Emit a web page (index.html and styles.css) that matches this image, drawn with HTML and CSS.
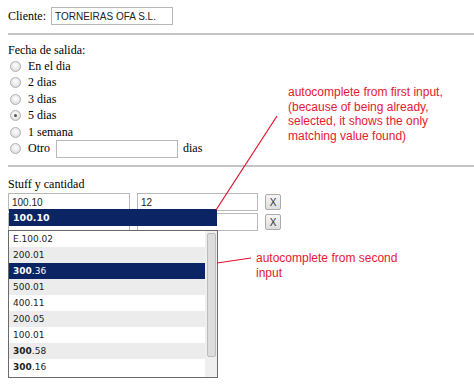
FILE: index.html
```html
<!DOCTYPE html>
<html lang="es">
<head>
    <meta charset="UTF-8">
    <title>Pedido</title>
    <link rel="stylesheet" href="styles.css">
</head>
<body>
    <div class="page">
        <div class="cliente-row">
            <label for="cliente">Cliente:</label>
            <input type="text" id="cliente" class="field cliente-input" value="TORNEIRAS OFA S.L.">
        </div>

        <hr class="sep">

        <div class="fecha">
            <div class="section-title">Fecha de salida:</div>
            <label class="radio-row"><input type="radio" name="fecha"> En el dia</label>
            <label class="radio-row"><input type="radio" name="fecha"> 2 dias</label>
            <label class="radio-row"><input type="radio" name="fecha"> 3 dias</label>
            <label class="radio-row"><input type="radio" name="fecha" checked> 5 dias</label>
            <label class="radio-row"><input type="radio" name="fecha"> 1 semana</label>
            <label class="radio-row"><input type="radio" name="fecha"> Otro <input type="text" class="field otro-input"> dias</label>
        </div>

        <hr class="sep">

        <div class="stuff">
            <div class="section-title">Stuff y cantidad</div>
            <div class="stuff-row">
                <input type="text" class="field code-input" value="100.10">
                <input type="text" class="field qty-input" value="12">
                <button class="del-btn">X</button>
            </div>
            <div class="stuff-row">
                <input type="text" class="field code-input" value="300">
                <input type="text" class="field qty-input">
                <button class="del-btn">X</button>
            </div>
        </div>

        <!-- autocomplete del primer input -->
        <ul class="ac-menu ac-single">
            <li class="ac-item active"><b>100.10</b></li>
        </ul>

        <!-- autocomplete del segundo input -->
        <div class="ac-menu ac-list">
            <ul class="ac-items">
                <li class="ac-item">E.100.02</li>
                <li class="ac-item alt">200.01</li>
                <li class="ac-item active"><b>300</b>.36</li>
                <li class="ac-item alt">500.01</li>
                <li class="ac-item">400.11</li>
                <li class="ac-item alt">200.05</li>
                <li class="ac-item">100.01</li>
                <li class="ac-item alt"><b>300</b>.58</li>
                <li class="ac-item"><b>300</b>.16</li>
            </ul>
            <div class="ac-scroll"><div class="ac-thumb"></div></div>
        </div>

        <svg class="arrows" width="474" height="392" viewBox="0 0 474 392">
            <line x1="277" y1="116" x2="216" y2="210" stroke="#e0102a" stroke-width="1.2"/>
            <line x1="217" y1="263" x2="251" y2="258" stroke="#e0102a" stroke-width="1.2"/>
        </svg>

        <div class="note note-first">autocomplete from first input,<br>(because of being already,<br>selected, it shows the only<br>matching value found)</div>
        <div class="note note-second">autocomplete from second<br>input</div>
    </div>
</body>
</html>
```

FILE: styles.css
```css
body {
    margin: 0;
    font-family: 'Liberation Serif', 'Times New Roman', serif;
    font-size: 12px;
    color: #000;
    background: #fff;
}

.page {
    position: relative;
    width: 474px;
    height: 392px;
    overflow: hidden;
    padding: 7px 0 0 8px;
    box-sizing: border-box;
}

.field {
    box-sizing: border-box;
    height: 18px;
    border: 1px solid #b8b8b8;
    padding: 0 3px;
    font-family: 'Liberation Sans', Arial, sans-serif;
    font-size: 10px;
    color: #222;
    background: #fff;
    outline: none;
}

.cliente-row {
    display: flex;
    align-items: center;
    gap: 5px;
}

.cliente-input {
    width: 122px;
}

.sep {
    border: none;
    height: 2px;
    background: #c4c4c4;
    margin: 8px 0 0 0;
}

.section-title {
    line-height: 16px;
}

.fecha {
    margin-top: 7px;
}

.radio-row {
    display: flex;
    align-items: center;
    height: 16.5px;
    padding-left: 2px;
}

.radio-row input[type="radio"] {
    appearance: none;
    -webkit-appearance: none;
    width: 11px;
    height: 11px;
    margin: 0 7px 0 0;
    border: 1px solid #b0b0b0;
    border-radius: 50%;
    background: radial-gradient(circle at 50% 40%, #ffffff 0%, #e6e6e6 60%, #cfcfcf 100%);
    box-sizing: border-box;
    position: relative;
}

.radio-row input[type="radio"]:checked::after {
    content: '';
    position: absolute;
    left: 3px;
    top: 3px;
    width: 3px;
    height: 3px;
    border-radius: 50%;
    background: #555;
}

.otro-input {
    width: 122px;
    margin: 0 5px 0 6px;
}

.stuff {
    margin-top: 9px;
}

.stuff .section-title {
    margin-bottom: 1px;
}

.stuff-row {
    display: flex;
    align-items: center;
    gap: 7px;
    margin-bottom: 2px;
}

.code-input {
    width: 122px;
}

.qty-input {
    width: 121px;
}

.del-btn {
    width: 16px;
    height: 16px;
    padding: 0;
    border: 1px solid #acacac;
    border-radius: 2px;
    background: linear-gradient(#f6f6f6, #dedede);
    font-family: 'Liberation Sans', Arial, sans-serif;
    font-size: 10px;
    color: #333;
}

.ac-menu {
    position: absolute;
    margin: 0;
    padding: 0;
    list-style: none;
    font-family: 'DejaVu Sans', Verdana, sans-serif;
    font-size: 9px;
}

.ac-single {
    left: 9px;
    top: 209px;
    width: 208px;
    background: #0b2463;
}

.ac-item {
    height: 16px;
    line-height: 16px;
    padding-left: 4px;
    color: #222;
    background: #fff;
}

.ac-item.alt {
    background: #ececec;
}

.ac-item.active {
    background: #0b2463;
    color: #fff;
}

.ac-single .ac-item {
    height: 17px;
    line-height: 17px;
    font-size: 9.5px;
}

.ac-list {
    left: 8px;
    top: 230px;
    width: 210px;
    height: 148px;
    box-sizing: border-box;
    border: 1px solid #6a6a6a;
    background: #fff;
    display: flex;
    overflow: hidden;
}

.ac-items {
    flex: 1;
    margin: 0;
    padding: 0;
    list-style: none;
}

.ac-scroll {
    width: 12px;
    background: #efefef;
    padding: 2px 1px 0 2px;
    box-sizing: border-box;
}

.ac-thumb {
    height: 122px;
    border: 1px solid #bcbcbc;
    border-radius: 2px;
    background: #dcdcdc;
}

.arrows {
    position: absolute;
    left: 0;
    top: 0;
    pointer-events: none;
}

.note {
    position: absolute;
    font-family: 'Liberation Sans', Arial, sans-serif;
    font-size: 12px;
    line-height: 14.5px;
    color: #e5192f;
}

.note-first {
    left: 288px;
    top: 85px;
}

.note-second {
    left: 256px;
    top: 251px;
}
```
